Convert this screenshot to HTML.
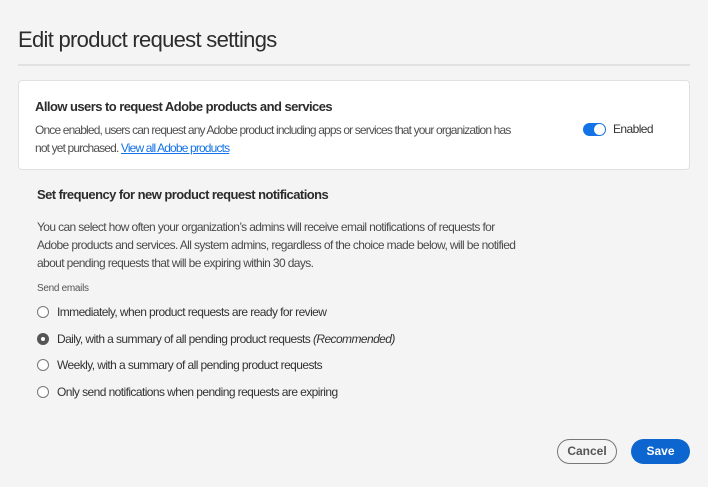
<!DOCTYPE html>
<html><head><meta charset="utf-8"><style>
*{margin:0;padding:0;box-sizing:border-box}
html,body{width:708px;height:487px;background:#f4f4f4;font-family:"Liberation Sans",sans-serif;color:#4b4b4b;overflow:hidden;position:relative}
.a{position:absolute;white-space:nowrap}
.t{font-size:12px;letter-spacing:-0.58px}
h1{position:absolute;left:18px;top:27px;font-size:22px;font-weight:normal;color:#2c2c2c;letter-spacing:-0.7px}
.rule{position:absolute;left:18px;top:64px;width:672px;height:2px;background:#e1e1e1}
.card{position:absolute;left:18px;top:80px;width:672px;height:90px;background:#fff;border:1px solid #e1e1e1;border-radius:4px}
.b{font-weight:bold;font-size:13px;color:#2c2c2c;letter-spacing:-0.55px}
.radio{position:absolute;left:37px;width:12px;height:12px;border:1px solid #777;border-radius:50%;background:#fff}
.radio.on{border:4px solid #555}
.btn{position:absolute;top:439px;height:25px;border-radius:13px;font-size:12px;font-weight:bold;text-align:center;line-height:23px}
</style></head><body>
<h1>Edit product request settings</h1>
<div class="rule"></div>
<div class="card"></div>
<div class="a b" style="left:35px;top:99px">Allow users to request Adobe products and services</div>
<div class="a t" style="left:35px;top:121px;line-height:18px;color:#505050;letter-spacing:-0.85px">Once enabled, users can request any Adobe product including apps or services that your organization has<br>not yet purchased. <span style="color:#1473e6;text-decoration:underline">View all Adobe products</span></div>
<div class="a" style="left:583px;top:123px;width:23px;height:13px;border-radius:7px;background:#1473e6"></div>
<div class="a" style="left:594px;top:124px;width:11px;height:11px;border-radius:50%;background:#fff"></div>
<div class="a t" style="left:613px;top:122px;color:#333">Enabled</div>
<div class="a b" style="left:37px;top:187px">Set frequency for new product request notifications</div>
<div class="a t" style="left:37px;top:218px;line-height:18px;color:#4b4b4b;letter-spacing:-0.62px">You can select how often your organization’s admins will receive email notifications of requests for<br>Adobe products and services. All system admins, regardless of the choice made below, will be notified<br>about pending requests that will be expiring within 30 days.</div>
<div class="a" style="left:37px;top:283px;font-size:10px;color:#555;letter-spacing:-0.3px">Send emails</div>
<div class="radio" style="top:306px"></div>
<div class="a t" style="left:57px;top:305px;color:#333">Immediately, when product requests are ready for review</div>
<div class="radio on" style="top:333px"></div>
<div class="a t" style="left:57px;top:332px;color:#333">Daily, with a summary of all pending product requests <i>(Recommended)</i></div>
<div class="radio" style="top:359px"></div>
<div class="a t" style="left:57px;top:358px;color:#333">Weekly, with a summary of all pending product requests</div>
<div class="radio" style="top:386px"></div>
<div class="a t" style="left:57px;top:385px;color:#333">Only send notifications when pending requests are expiring</div>
<div class="btn" style="left:557px;width:60px;border:1.5px solid #777;color:#555;background:#f4f4f4">Cancel</div>
<div class="btn" style="left:631px;width:59px;background:#0d66d0;color:#fff;line-height:25px">Save</div>
</body></html>
